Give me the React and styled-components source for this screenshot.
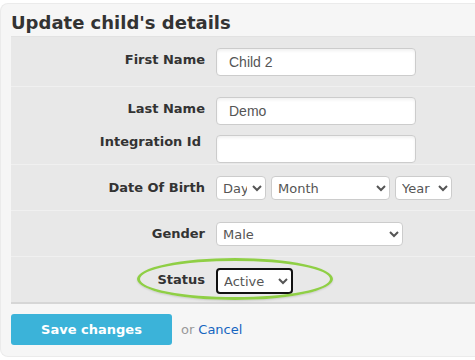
import React from 'react';
import styled, { createGlobalStyle } from 'styled-components';

const Global = createGlobalStyle`
	html, body {
		margin: 0;
		padding: 0;
		background: #ffffff;
		overflow: hidden;
	}
	body {
		font-family: "DejaVu Sans", Verdana, sans-serif;
		color: #333;
	}
`;

export default function App() {
	return (
		<>
			<Global />
			<Card>
				<Title>Update child's details</Title>
				<Panel>
					<Row>
						<Label>First Name</Label>
						<TextInput defaultValue="Child 2" />
					</Row>
					<Row $tall>
						<Label>Last Name</Label>
						<TextInput defaultValue="Demo" />
					</Row>
					<Row $plain>
						<Label $lift>Integration Id</Label>
						<TextInput defaultValue="" />
					</Row>
					<Row>
						<Label>Date Of Birth</Label>
						<Selects>
							<Select $w={50} defaultValue="Day">
								<option>Day</option>
							</Select>
							<Select $w={119} defaultValue="Month">
								<option>Month</option>
							</Select>
							<Select $w={57} defaultValue="Year">
								<option>Year</option>
							</Select>
						</Selects>
					</Row>
					<Row>
						<Label>Gender</Label>
						<Select $w={187} defaultValue="Male">
							<option>Male</option>
						</Select>
					</Row>
					<Row $last>
						<Label>Status</Label>
						<Select $w={77} $focus $h={26} defaultValue="Active">
							<option>Active</option>
						</Select>
						<Highlight />
					</Row>
				</Panel>
				<Actions>
					<SaveButton>Save changes</SaveButton>
					<Or>or</Or>
					<CancelLink href="#">Cancel</CancelLink>
				</Actions>
			</Card>
		</>
	);
}

const Card = styled.div`
	margin-top: 3px;
	width: 475px;
	height: 354px;
	box-sizing: border-box;
	background: #f6f6f6;
	border: 1px solid #ebebeb;
	border-right: none;
	border-radius: 8px 0 0 8px;
	padding: 6px 0 0 10px;
`;

const Title = styled.h1`
	margin: 0;
	height: 26px;
	font-size: 18px;
	line-height: 25px;
	font-weight: bold;
	color: #333;
`;

const Panel = styled.div`
	background: #e8e8e8;
	border-top: 1px solid #e2e2e2;
	border-bottom: 2px solid #d6d6d6;
`;

const Row = styled.div`
	position: relative;
	display: grid;
	grid-template-columns: 194px auto;
	column-gap: 11px;
	align-items: start;
	padding: ${(p) => (p.$plain ? '10px 0 1px' : p.$tall ? '10px 0 0' : '11px 0 10px')};
	border-bottom: ${(p) => (p.$last || p.$tall ? 'none' : '1px solid #f0f0f0')};
	${(p) => p.$last && 'padding: 11px 0 8px;'}
`;

const Label = styled.label`
	text-align: right;
	font-size: 13px;
	font-weight: bold;
	line-height: 20px;
	color: #333;
	padding-top: ${(p) => (p.$lift ? '0' : '2px')};
	margin-top: ${(p) => (p.$lift ? '-3px' : '0')};
	padding-right: ${(p) => (p.$lift ? '4px' : '0')};
	white-space: nowrap;
`;

const TextInput = styled.input`
	width: 200px;
	height: 28px;
	box-sizing: border-box;
	border: 1px solid #cccccc;
	border-radius: 4px;
	background: #fff;
	box-shadow: inset 0 2px 3px rgba(0, 0, 0, 0.06);
	padding: 0 12px;
	font-family: "Liberation Sans", Arial, sans-serif;
	font-size: 14px;
	color: #555;
	outline: none;
`;

const Selects = styled.div`
	display: flex;
	gap: 5px;
`;

const Select = styled.select`
	width: ${(p) => p.$w}px;
	height: ${(p) => p.$h || 24}px;
	box-sizing: border-box;
	border: ${(p) => (p.$focus ? '2px solid #111' : '1px solid #cccccc')};
	border-radius: 4px;
	background: #fff;
	padding: 0 2px;
	font-family: "DejaVu Sans", Verdana, sans-serif;
	font-size: 13px;
	color: #555;
	outline: none;
`;

const Highlight = styled.div`
	position: absolute;
	left: 126px;
	top: 1px;
	width: 196px;
	height: 42px;
	box-sizing: border-box;
	border: 3px solid #8fcf45;
	border-radius: 50%;
	box-shadow: 0 1px 2px rgba(0, 0, 0, 0.12);
	pointer-events: none;
`;

const Actions = styled.div`
	display: flex;
	align-items: center;
	margin-top: 10px;
	gap: 8px;
`;

const SaveButton = styled.button`
	width: 161px;
	height: 31px;
	border: none;
	border-radius: 3px;
	background: #3bb3d9;
	color: #fff;
	font-family: "DejaVu Sans", Verdana, sans-serif;
	font-size: 13px;
	font-weight: bold;
	cursor: pointer;
`;

const Or = styled.span`
	font-size: 13px;
	color: #999;
	margin-left: 1px;
`;

const CancelLink = styled.a`
	font-size: 13px;
	color: #1565c0;
	text-decoration: none;
	margin-left: -4px;
`;
